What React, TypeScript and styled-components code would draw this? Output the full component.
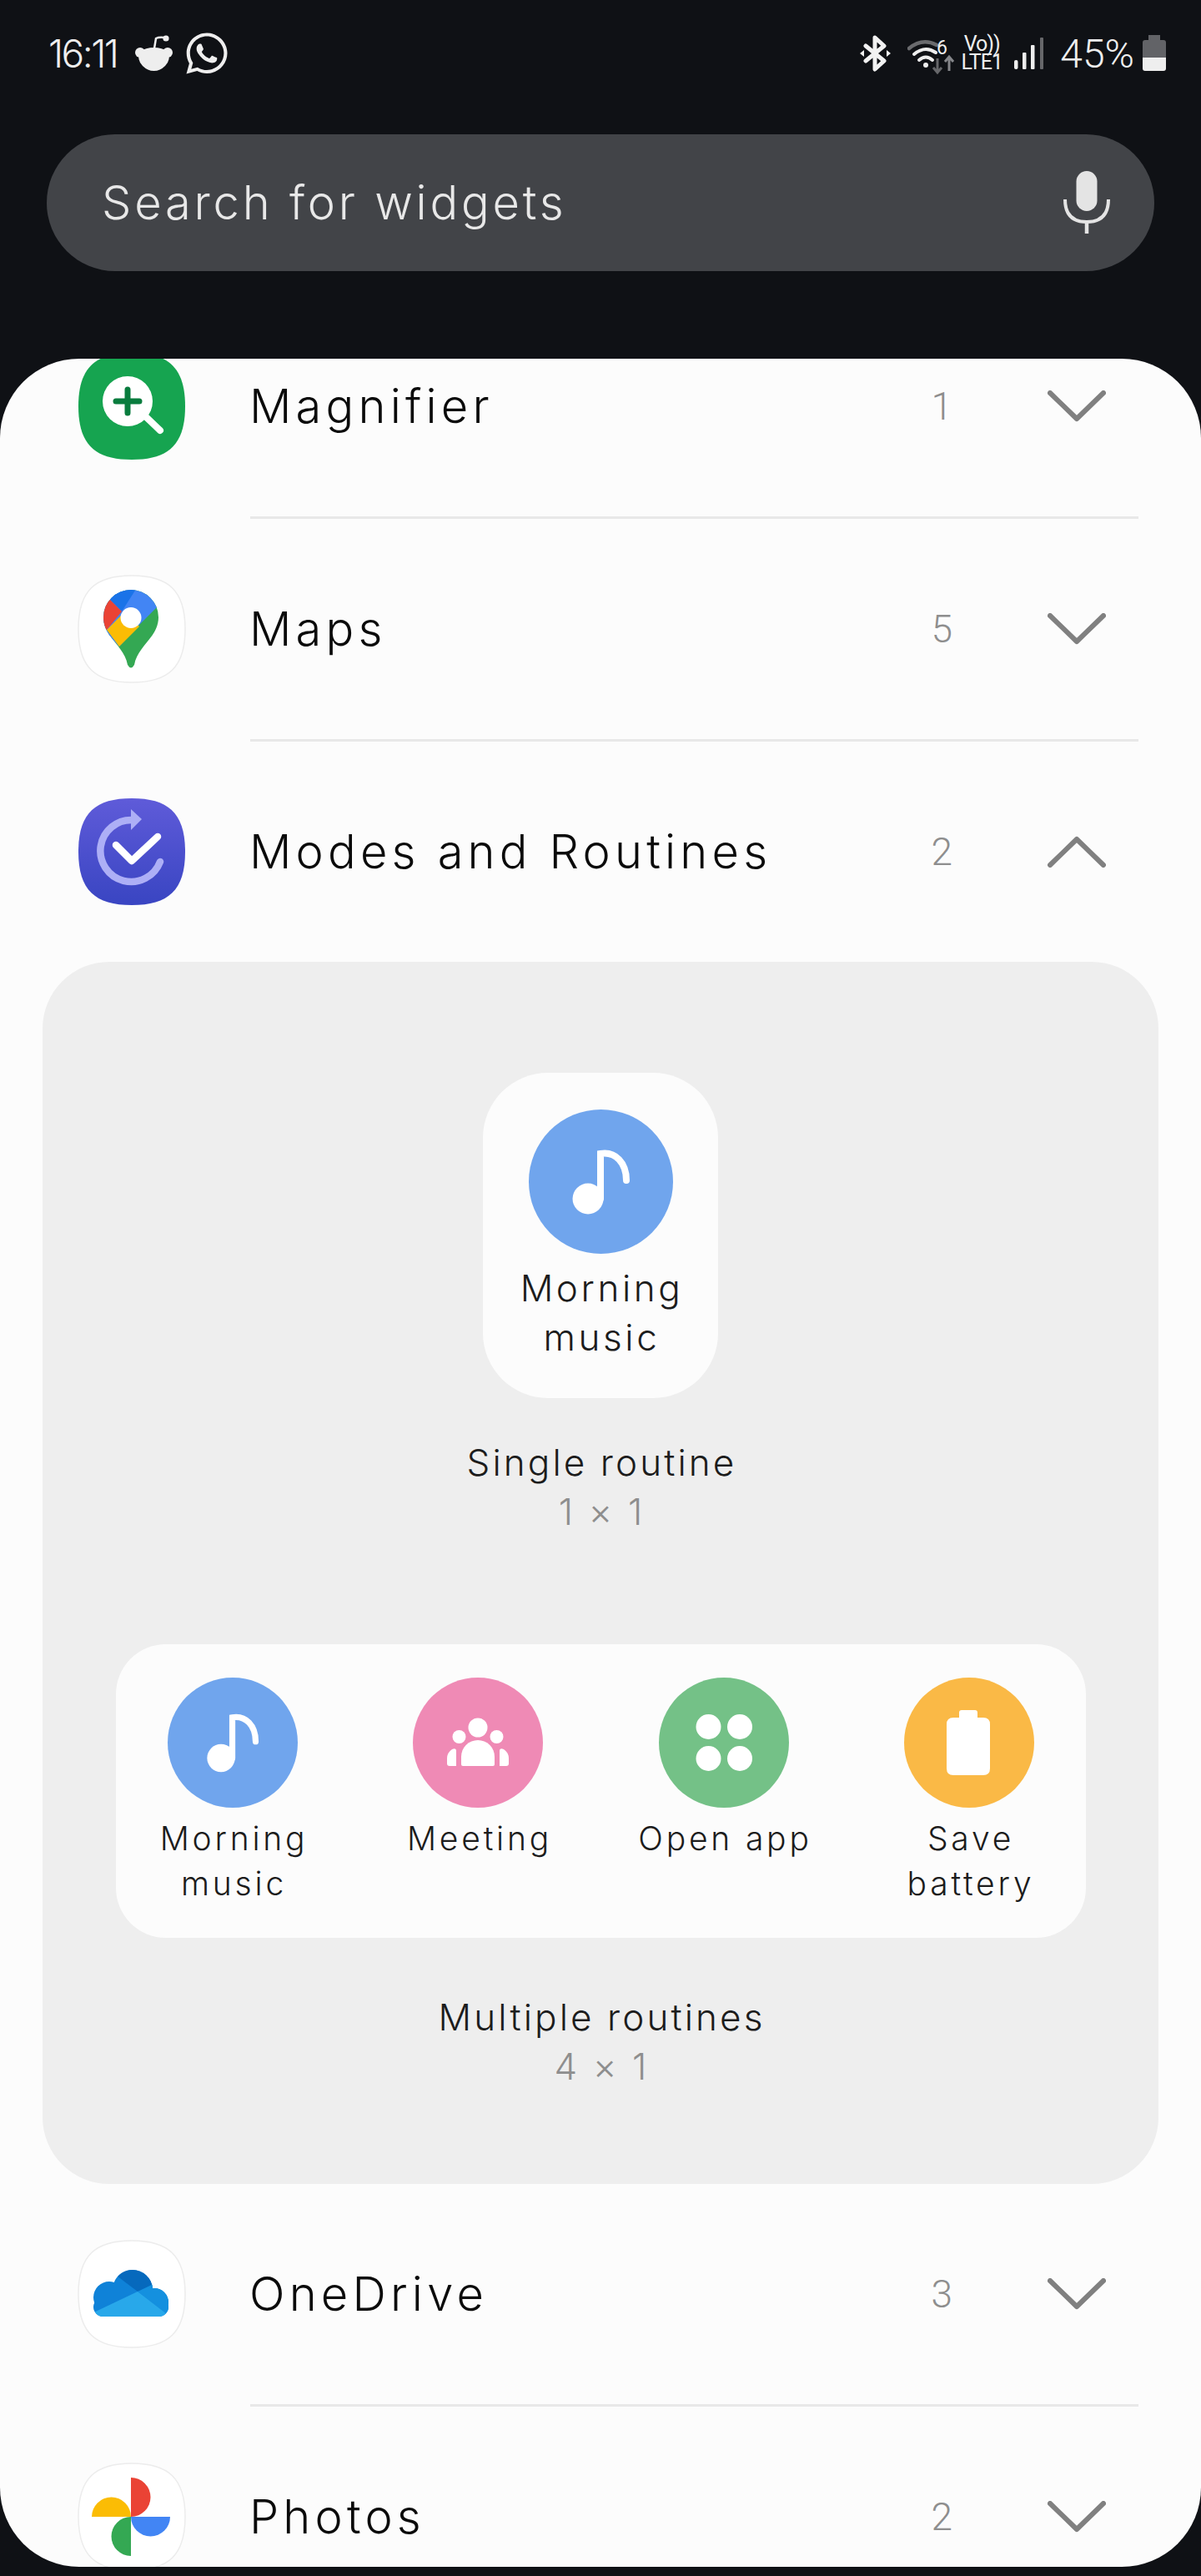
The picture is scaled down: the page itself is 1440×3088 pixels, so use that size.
import styled, { createGlobalStyle } from 'styled-components'
import { FaWhatsapp } from 'react-icons/fa'

const GlobalStyle = createGlobalStyle`
  html, body {
    margin: 0;
    padding: 0;
    background: #0f1115;
    font-family: "Inter", "Noto Sans", sans-serif;
  }
`

function RedditIcon() {
  return (
    <svg width="47" height="44" viewBox="0 0 47 44">
      <path d="M24 16 L26 4 Q30 2 36 3" fill="none" stroke="#eeeeee" strokeWidth="2.5" />
      <circle cx="38" cy="4" r="3.6" fill="#eeeeee" />
      <circle cx="7" cy="21" r="6" fill="#eeeeee" />
      <circle cx="40" cy="21" r="6" fill="#eeeeee" />
      <path d="M6 20 Q14 15 23.5 15 Q33 15 41 20 Q44 30 37 37 Q31 43 23.5 43 Q16 43 10 37 Q3 30 6 20Z" fill="#eeeeee" />
    </svg>
  )
}

function BluetoothIcon() {
  return (
    <svg width="37" height="44" viewBox="0 0 37 44">
      <path d="M7 13 L29 31 L18 41 V3 L29 13 L7 31" fill="none" stroke="#f2f2f2" strokeWidth="5" strokeLinejoin="round" strokeLinecap="round" />
      <path d="M0 22 L5 18 V26Z M37 22 L32 18 V26Z" fill="#f2f2f2" />
    </svg>
  )
}

function WifiIcon() {
  return (
    <svg width="57" height="52" viewBox="0 -8 57 52">
      <path d="M2 12 Q18 -1 35 8" fill="none" stroke="#6a6b6e" strokeWidth="4.5" strokeLinecap="round" />
      <path d="M8 19 Q21 8 34 17" fill="none" stroke="#eeeeee" strokeWidth="4" strokeLinecap="round" />
      <path d="M14 26 Q22 19 30 26" fill="none" stroke="#eeeeee" strokeWidth="4" strokeLinecap="round" />
      <circle cx="22" cy="32" r="3" fill="#eeeeee" />
      <text x="35" y="19" fontFamily="Roboto" fontSize="23" fill="#eeeeee">6</text>
      <path d="M36 24 V41 M31 35 L36 41 L41 35" fill="none" stroke="#66676a" strokeWidth="3" />
      <path d="M50 39 V22 M45 28 L50 22 L55 28" fill="none" stroke="#85868a" strokeWidth="3" />
    </svg>
  )
}

function SignalIcon() {
  return (
    <svg width="36" height="40" viewBox="0 0 36 40">
      <rect x="0" y="28" width="4.5" height="11" rx="2" fill="#eeeeee" />
      <rect x="10" y="19" width="4.5" height="20" rx="1" fill="#eeeeee" />
      <rect x="20" y="10" width="4.5" height="29" rx="1" fill="#eeeeee" />
      <rect x="31" y="1" width="4" height="38" rx="1" fill="#66676a" />
    </svg>
  )
}

function BatteryIcon() {
  return (
    <svg width="28" height="44" viewBox="0 0 28 44">
      <path d="M7 0 H21 V6 H25 Q28 6 28 9 V27 H0 V9 Q0 6 3 6 H7Z" fill="#626367" />
      <path d="M0 27 H28 V40 Q28 43 25 43 H3 Q0 43 0 40Z" fill="#eeeeee" />
    </svg>
  )
}

function MicIcon() {
  return (
    <svg width="56" height="76" viewBox="0 0 56 76">
      <rect x="15.5" y="0" width="25" height="48" rx="12.5" fill="#e4e4e4" />
      <path d="M2 34 Q2 61 28 61 Q54 61 54 34" fill="none" stroke="#e4e4e4" strokeWidth="4" />
      <path d="M28 60 V75" stroke="#e4e4e4" strokeWidth="4.5" />
    </svg>
  )
}

function Chevron({ up }: { up?: boolean }) {
  return (
    <ChevronSvg viewBox="0 0 70 38">
      <path d={up ? 'M3 35 L35 4 L67 35' : 'M3 3 L35 34 L67 3'} />
    </ChevronSvg>
  )
}

const SQUIRCLE = 'M64 0 C108 0 128 18 128 64 C128 110 108 128 64 128 C20 128 0 110 0 64 C0 18 20 0 64 0Z'

function AppShape({ fill, outline, children }: { fill: string; outline?: boolean; children: any }) {
  return (
    <AppSvg viewBox="-1 -1 130 130">
      <path d={SQUIRCLE} fill={fill} stroke={outline ? '#ececec' : 'none'} strokeWidth="1.5" />
      {children}
    </AppSvg>
  )
}

function MagnifierIcon() {
  return (
    <AppShape fill="#16a450">
      <path d="M76 72 L98 93" stroke="#fff" strokeWidth="8" strokeLinecap="round" />
      <circle cx="59" cy="58" r="30" fill="#fff" />
      <path d="M45 58 H73 M59 44 V72" stroke="#097c3e" strokeWidth="7" strokeLinecap="round" />
    </AppShape>
  )
}

function MapsIcon() {
  return (
    <AppShape fill="#ffffff" outline>
      <defs>
        <clipPath id="pin">
          <path d="M63 17 A33 33 0 0 1 96 50 C96 74 71 84 67 107 Q63 114 59 107 C55 84 30 74 30 50 A33 33 0 0 1 63 17Z" />
        </clipPath>
      </defs>
      <g clipPath="url(#pin)">
        <rect x="25" y="10" width="80" height="110" fill="#34a853" />
        <polygon points="25,10 105,10 105,28 94,38 72,60 49,85 25,60" fill="#4285f4" />
        <polygon points="25,10 73,10 52,43 38,29" fill="#1a73e8" />
        <polygon points="25,20 38,29 52,43 34,65 25,60" fill="#ea4335" />
        <polygon points="34,65 55,44 73,61 49,85" fill="#fbbc04" />
      </g>
      <ellipse cx="63" cy="50.5" rx="12.5" ry="12.5" fill="#fff" />
    </AppShape>
  )
}

function ModesIcon() {
  return (
    <AppShape fill="url(#modes)">
      <defs>
        <linearGradient id="modes" x1="0" y1="0" x2="0" y2="1">
          <stop offset="0" stopColor="#5f5bd9" />
          <stop offset="1" stopColor="#3945c2" />
        </linearGradient>
      </defs>
      <path d="M65 26 A37 37 0 1 0 98 76" fill="none" stroke="#adaff6" strokeWidth="8.5" strokeLinecap="round" />
      <polygon points="63,13 76,25 63,38" fill="#adaff6" />
      <path d="M45 56 L64 75 L95 46" fill="none" stroke="#fff" strokeWidth="8.5" strokeLinecap="round" strokeLinejoin="round" />
    </AppShape>
  )
}

function OneDriveIcon() {
  return (
    <AppShape fill="#ffffff" outline>
      <defs>
        <clipPath id="cloud">
          <circle cx="65" cy="59" r="24" />
          <circle cx="37" cy="68" r="19" />
          <circle cx="91" cy="74" r="17" />
          <rect x="18" y="68" width="90" height="23" rx="12" />
        </clipPath>
      </defs>
      <g clipPath="url(#cloud)">
        <rect x="10" y="30" width="105" height="65" fill="#0f82d8" />
        <polygon points="30,30 95,30 90,56 71,61" fill="#0669bd" />
        <polygon points="90,52 115,60 115,95 71,61" fill="#1490df" />
        <polygon points="71,61 115,95 10,95 10,90" fill="#28a8ea" />
      </g>
    </AppShape>
  )
}

function PhotosIcon() {
  return (
    <AppShape fill="#ffffff" outline>
      <path d="M63 17 A23.5 23.5 0 0 1 63 64Z" fill="#ea4335" />
      <path d="M16 64 A23.5 23.5 0 0 1 63 64Z" fill="#fbbc04" />
      <path d="M63 64 A23.5 23.5 0 0 0 110 64Z" fill="#4285f4" />
      <path d="M63 64 A23.5 23.5 0 0 0 63 111Z" fill="#34a853" />
    </AppShape>
  )
}

function NoteGlyph() {
  return (
    <GlyphSvg viewBox="0 0 173 173">
      <circle cx="71" cy="107" r="18.5" fill="#fff" />
      <path d="M86 107 V53 C104 50 117 64 117 85" fill="none" stroke="#fff" strokeWidth="8" strokeLinecap="round" />
    </GlyphSvg>
  )
}

function PeopleGlyph() {
  return (
    <GlyphSvg viewBox="0 0 156 156">
      <circle cx="78" cy="60" r="11.5" fill="#fff" />
      <circle cx="55.5" cy="71" r="8" fill="#fff" />
      <circle cx="100.5" cy="71" r="8" fill="#fff" />
      <path d="M58 104 V95 A20 20 0 0 1 98 95 V104 Q98 106 96 106 H60 Q58 106 58 104Z" fill="#fff" />
      <path d="M41 103 V97 Q41 90 47 86 Q52 84 52 88 V106 H44 Q41 106 41 103Z" fill="#fff" />
      <path d="M115 103 V97 Q115 90 109 86 Q104 84 104 88 V106 H112 Q115 106 115 103Z" fill="#fff" />
    </GlyphSvg>
  )
}

function AppsGlyph() {
  return (
    <GlyphSvg viewBox="0 0 156 156">
      <circle cx="59.5" cy="59" r="15" fill="#fff" />
      <circle cx="97" cy="59" r="15" fill="#fff" />
      <circle cx="59.5" cy="97" r="15" fill="#fff" />
      <circle cx="97" cy="97" r="15" fill="#fff" />
    </GlyphSvg>
  )
}

function BatteryGlyph() {
  return (
    <GlyphSvg viewBox="0 0 156 156">
      <path d="M66 42 Q66 39 69 39 H85 Q88 39 88 42 V48 H95 Q103 48 103 56 V109 Q103 117 95 117 H59 Q51 117 51 109 V56 Q51 48 59 48 H66Z" fill="#fff" />
    </GlyphSvg>
  )
}

const ROUTINES = [
  { name: 'Morning music', color: '#70a5ed', glyph: <NoteGlyph /> },
  { name: 'Meeting', color: '#ef8ab5', glyph: <PeopleGlyph /> },
  { name: 'Open app', color: '#74c187', glyph: <AppsGlyph /> },
  { name: 'Save battery', color: '#fab946', glyph: <BatteryGlyph /> },
]

function ListRow({ icon, title, count, open }: { icon: any; title: string; count: number; open?: boolean }) {
  return (
    <Row>
      {icon}
      <RowTitle>{title}</RowTitle>
      <RowCount>{count}</RowCount>
      <Chevron up={open} />
    </Row>
  )
}

function App() {
  return (
    <Page>
      <GlobalStyle />
      <StatusBar>
        <StatusLeft>
          <Clock>16:11</Clock>
          <RedditIcon />
          <FaWhatsapp size={56} color="#eeeeee" />
        </StatusLeft>
        <StatusRight>
          <BluetoothIcon />
          <StatusSlot $gap={20}>
            <WifiIcon />
          </StatusSlot>
          <NetworkStack>
            <span>Vo))</span>
            <span>LTE1</span>
          </NetworkStack>
          <StatusSlot $gap={13}>
            <SignalIcon />
          </StatusSlot>
          <BatteryText>45%</BatteryText>
          <StatusSlot $gap={10}>
            <BatteryIcon />
          </StatusSlot>
        </StatusRight>
      </StatusBar>

      <SearchBar>
        <SearchText>Search for widgets</SearchText>
        <MicIcon />
      </SearchBar>

      <Panel>
        <List>
          <ListRow icon={<MagnifierIcon />} title="Magnifier" count={1} />
          <Divider />
          <ListRow icon={<MapsIcon />} title="Maps" count={5} />
          <Divider />
          <ListRow icon={<ModesIcon />} title="Modes and Routines" count={2} open />

          <Expanded>
            <SingleWidget>
              <SingleCircle>
                <NoteGlyph />
              </SingleCircle>
              <SingleLabel>Morning music</SingleLabel>
            </SingleWidget>
            <CaptionBlock $top={48}>
              <CaptionTitle>Single routine</CaptionTitle>
              <CaptionSize>1 × 1</CaptionSize>
            </CaptionBlock>

            <MultiWidget>
              {ROUTINES.map((routine) => (
                <Routine key={routine.name}>
                  <RoutineCircle $color={routine.color}>{routine.glyph}</RoutineCircle>
                  <RoutineLabel>{routine.name}</RoutineLabel>
                </Routine>
              ))}
            </MultiWidget>
            <CaptionBlock $top={66}>
              <CaptionTitle>Multiple routines</CaptionTitle>
              <CaptionSize>4 × 1</CaptionSize>
            </CaptionBlock>
          </Expanded>

          <ListRow icon={<OneDriveIcon />} title="OneDrive" count={3} />
          <Divider />
          <ListRow icon={<PhotosIcon />} title="Photos" count={2} />
        </List>
      </Panel>
    </Page>
  )
}

const Page = styled.div`
  width: 1440px;
  height: 3088px;
  overflow: hidden;
  background: #0f1115;
`

const StatusBar = styled.div`
  height: 128px;
  padding: 0 42px 0 58px;
  display: flex;
  align-items: center;
  justify-content: space-between;
  color: #eeeeee;
`

const StatusLeft = styled.div`
  display: flex;
  align-items: center;
  gap: 12px;
`

const Clock = styled.span`
  font-size: 46px;
  font-weight: 300;
  letter-spacing: -2.5px;
  margin-right: 9px;
`

const StatusRight = styled.div`
  display: flex;
  align-items: center;
`

const StatusSlot = styled.div<{ $gap: number }>`
  display: flex;
  margin-left: ${(p) => p.$gap}px;
`

const NetworkStack = styled.div`
  display: flex;
  flex-direction: column;
  align-items: center;
  margin-left: 6px;
  width: 52px;
  font-family: "Roboto", sans-serif;
  font-size: 25px;
  line-height: 22px;
  letter-spacing: -1px;
`

const BatteryText = styled.span`
  margin-left: 19px;
  font-family: "Roboto", sans-serif;
  font-weight: 300;
  font-size: 48px;
`

const SearchBar = styled.div`
  margin: 33px 56px 0;
  height: 164px;
  border-radius: 82px;
  background: #424448;
  padding: 0 53px 0 66px;
  display: flex;
  align-items: center;
  justify-content: space-between;
`

const SearchText = styled.span`
  font-size: 56px;
  font-weight: 300;
  letter-spacing: 3.8px;
  color: #e8e8e8;
`

const Panel = styled.div`
  margin-top: 105px;
  height: 2647px;
  border-radius: 95px;
  background: #fcfcfc;
  overflow: hidden;
`

const List = styled.div`
  margin-top: -75px;
`

const Row = styled.div`
  height: 264px;
  padding: 0 114px 0 94px;
  display: flex;
  align-items: center;
`

const AppSvg = styled.svg`
  width: 130px;
  height: 130px;
  margin: 0 -1px;
  flex: none;
`

const RowTitle = styled.span`
  flex: 1;
  margin-left: 77px;
  font-size: 56px;
  font-weight: 300;
  letter-spacing: 5.2px;
  color: #0a0a0a;
`

const RowCount = styled.span`
  width: 46px;
  text-align: right;
  font-family: "Roboto", sans-serif;
  font-weight: 300;
  font-size: 46px;
  color: #8e8e8e;
`

const ChevronSvg = styled.svg`
  width: 70px;
  height: 38px;
  margin-left: 114px;
  flex: none;

  path {
    fill: none;
    stroke: #808080;
    stroke-width: 6;
    stroke-linecap: round;
    stroke-linejoin: round;
  }
`

const Divider = styled.div`
  height: 3px;
  width: 1065px;
  margin-left: 300px;
  background: #e8e8e8;
`

const Expanded = styled.div`
  height: 1465px;
  margin: 0 51px;
  padding-top: 133px;
  box-sizing: border-box;
  border-radius: 80px;
  background: #eeeeee;
  display: flex;
  flex-direction: column;
  align-items: center;
`

const SingleWidget = styled.div`
  width: 282px;
  height: 390px;
  padding-top: 44px;
  box-sizing: border-box;
  border-radius: 78px;
  background: #fcfcfc;
  display: flex;
  flex-direction: column;
  align-items: center;
`

const SingleCircle = styled.div`
  width: 173px;
  height: 173px;
  border-radius: 50%;
  background: #70a5ed;
  flex: none;
`

const GlyphSvg = styled.svg`
  display: block;
  width: 100%;
  height: 100%;
`

const SingleLabel = styled.div`
  margin-top: 12px;
  width: 260px;
  padding-left: 3px;
  box-sizing: border-box;
  text-align: center;
  font-size: 44px;
  font-weight: 300;
  line-height: 59px;
  letter-spacing: 3.6px;
  color: #1c1c1c;
`

const CaptionBlock = styled.div<{ $top: number }>`
  margin-top: ${(p) => p.$top}px;
  padding-left: 3px;
  text-align: center;
  font-size: 44px;
  font-weight: 300;
  line-height: 59px;
  letter-spacing: 3.1px;
`

const CaptionTitle = styled.div`
  color: #1c1c1c;
`

const CaptionSize = styled.div`
  color: #8e8e8e;
`

const MultiWidget = styled.div`
  margin-top: 129px;
  width: 1163px;
  height: 352px;
  padding-top: 40px;
  box-sizing: border-box;
  border-radius: 60px;
  background: #fcfcfc;
  display: grid;
  grid-template-columns: repeat(4, 280px);
  column-gap: 14.5px;
  align-items: start;
`

const Routine = styled.div`
  display: flex;
  flex-direction: column;
  align-items: center;
`

const RoutineCircle = styled.div<{ $color: string }>`
  width: 156px;
  height: 156px;
  border-radius: 50%;
  background: ${(p) => p.$color};
`

const RoutineLabel = styled.div`
  margin-top: 10px;
  width: 220px;
  padding-left: 4px;
  box-sizing: border-box;
  text-align: center;
  font-size: 39px;
  font-weight: 300;
  line-height: 54px;
  letter-spacing: 3.8px;
  color: #1c1c1c;
`

export default App
